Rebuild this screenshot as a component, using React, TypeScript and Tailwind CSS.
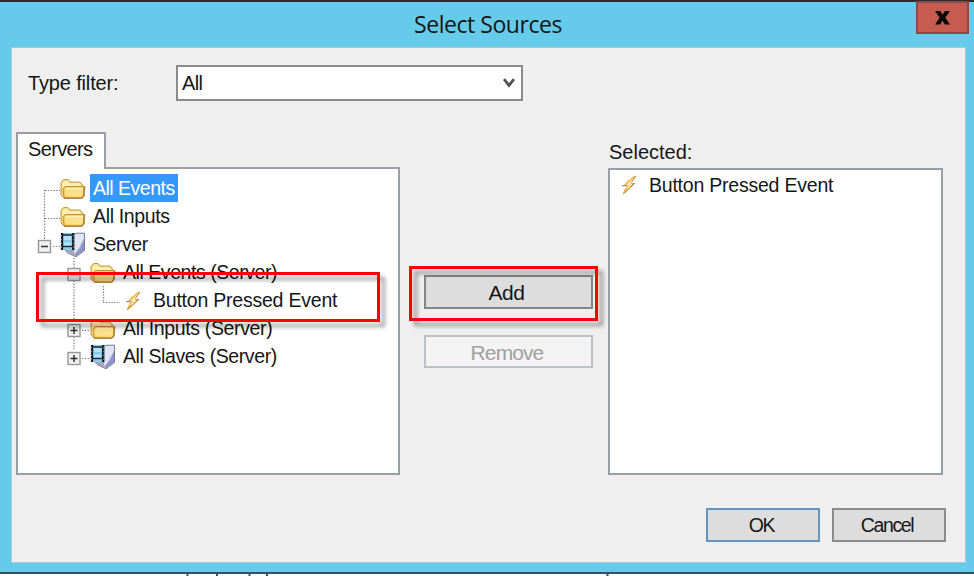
import React from "react";
import clsx from "clsx";

type IconName = "folder" | "server" | "bolt";

interface TreeItem {
  label: string;
  icon: IconName;
  level: number;
  spacing: string;
  selected?: boolean;
}

const treeItems: TreeItem[] = [
  { label: "All Events", icon: "folder", level: 0, spacing: "tracking-[-0.5px]", selected: true },
  { label: "All Inputs", icon: "folder", level: 0, spacing: "tracking-[-0.35px]" },
  { label: "Server", icon: "server", level: 0, spacing: "tracking-[-0.45px]" },
  { label: "All Events (Server)", icon: "folder", level: 1, spacing: "tracking-[-0.45px]" },
  { label: "Button Pressed Event", icon: "bolt", level: 2, spacing: "tracking-[-0.22px]" },
  { label: "All Inputs (Server)", icon: "folder", level: 1, spacing: "tracking-[-0.35px]" },
  { label: "All Slaves (Server)", icon: "server", level: 1, spacing: "tracking-[-0.4px]" },
];

const indents = ["pl-[42px]", "pl-[72px]", "pl-[102px]"];

const FolderIcon = () => (
  <svg width="26" height="22" viewBox="0 0 26 22">
    <path d="M1 17V4.5L3.5 1.5H8L10 4H20L22.5 7V17L4 20Z" fill="#f6d67d" stroke="#c39a45" />
    <path d="M2.3 10V5L4.2 2.8H7.5L9.5 5.2H19.5L21 7V9H5Z" fill="#fff0b0" />
    <path d="M4.2 20.2L3 11.5L5 8.5H25L24 17.5L21.8 20.2Z" fill="#f8cf60" stroke="#c2933a" />
    <path d="M5.3 18V11.2L6.4 9.8H23.5L22.3 17L20.8 18.8Z" fill="#fde08a" />
    <path d="M5.5 10.6H23" stroke="#fff3b8" strokeWidth="1.2" />
    <path d="M4.2 20.2H21.8L24 17.7V9" fill="none" stroke="#a67a38" strokeWidth="1.2" />
  </svg>
);

const ServerIcon = () => (
  <svg width="26" height="26" viewBox="0 0 26 26">
    <path d="M13 3L16 1.2H24.5V18.5L16 24.8L7 20.5L4.5 17.5H13Z" fill="#c3c5e2" stroke="#7b7d98" />
    <path d="M14.5 3L16.5 2H23.8V7L15 22L14.5 21Z" fill="#e4e5f4" />
    <path d="M24 7V18.3L16 24.2L14.5 22.5L20 16Z" fill="#8f92c2" />
    <path d="M5 18H14V23.3L8 20.3Z" fill="#a5a7b8" />
    <rect x="1" y="1" width="13.5" height="17" fill="#86c9ed" />
    <path d="M4 4H11V8H4ZM4 10.5H11V15.5H4Z" fill="#b5e2f8" />
    <path d="M2 1V18M13.2 1V18" stroke="#15171c" strokeWidth="2.2" />
    <path d="M1.3 3V18M13.9 3V18" stroke="#a9b4bc" strokeWidth="1" strokeDasharray="1.5 2.3" />
    <path d="M3 3H12M3 14.5H12" stroke="#202a38" strokeWidth="1.4" />
  </svg>
);

const BoltIcon = () => (
  <svg width="16" height="20" viewBox="0 0 16 20">
    <path d="M13.5 1.2L6 6L2.8 10.3H6.8L1.8 18.8L12 10.5L9.2 9.3L14.7 1.2Z" fill="#f8d379" />
    <path d="M10 8.7H13L2.2 18.8" fill="none" stroke="#bd8946" strokeWidth="1.3" />
    <path d="M14.2 1.2L8 6.5L4.2 10M6.8 11L3 17" fill="none" stroke="#f4b84a" strokeWidth="1.7" />
    <path d="M13.5 3L7.2 9.1H10.5L6 14" fill="none" stroke="#fff1bd" strokeWidth="1.2" />
    <path d="M1 10.7H6" stroke="#7f7780" strokeWidth="1" />
    <path d="M14.7 1L10.5 7.5" stroke="#a56a2d" strokeWidth="0.8" />
  </svg>
);

const ItemIcon = ({ name }: { name: IconName }) => {
  if (name === "folder") return <FolderIcon />;
  if (name === "server") return <ServerIcon />;
  return <BoltIcon />;
};

const Expander = ({ x, y, open }: { x: number; y: number; open?: boolean }) => (
  <g>
    <rect x={x - 6} y={y - 6} width="12" height="12" fill="#f0f0f0" stroke="#989898" strokeWidth="1.4" />
    <path d={`M${x - 3.5} ${y}H${x + 3.5}`} stroke="#333" strokeWidth="1.5" />
    {!open && <path d={`M${x} ${y - 3.5}V${y + 3.5}`} stroke="#333" strokeWidth="1.5" />}
  </g>
);

const TreeLines = () => (
  <svg className="absolute left-0 top-0" width="380" height="304" viewBox="18 169 380 304">
    <path
      d="M44.5 190V239M45 190.5H60M45 218.5H60M53 246.5H61M74 258V268M74 281V323M74 337V351M82 330.5H90M82 358.5H90M103.5 286V303M103 302.5H120"
      fill="none"
      stroke="#777"
      strokeWidth="1.2"
      strokeDasharray="1.3 1.5"
    />
    <Expander x={44.5} y={246.5} open />
    <Expander x={74} y={274.5} open />
    <Expander x={74} y={330.5} />
    <Expander x={74} y={358.5} />
  </svg>
);

const Tree = () => (
  <div className="relative h-[308px] w-[384px] border-2 border-[#9a9ea6] bg-white pt-[5px]">
    <TreeLines />
    {treeItems.map((item) => (
      <div key={item.label} className={clsx("relative flex h-7 items-center", indents[item.level])}>
        <div className="flex w-[26px] items-center justify-center pt-[2px]">
          <ItemIcon name={item.icon} />
        </div>
        <span
          className={clsx(
            "ml-1 h-7 whitespace-nowrap px-[3px] text-[19.5px] leading-[29px]",
            item.spacing,
            item.selected && "bg-[#3399ff] text-white"
          )}
        >
          {item.label}
        </span>
      </div>
    ))}
  </div>
);

// Red marker drawn over the part of the dialog that the user should look at
const Highlight = ({ className }: { className: string }) => (
  <div
    className={clsx(
      "pointer-events-none absolute border-[3px] border-[#fb0000] drop-shadow-[5px_5px_2px_rgba(0,0,0,0.4)]",
      className
    )}
  />
);

export default function App() {
  return (
    <div
      className="relative flex h-[576px] w-[974px] flex-col overflow-hidden bg-white text-[#161616]"
      style={{ fontFamily: '"Liberation Sans", Arial, sans-serif' }}
    >
      <div className="flex h-[574px] flex-col border-b-2 border-t-2 border-b-[#35515d] border-t-[#30282d] bg-[#66cbea]">
        {/* Title bar */}
        <div className="flex h-[45px] shrink-0 items-start pr-[5px]">
          <h1
            className="ml-[60px] flex-1 pt-[6px] text-center text-[23px] leading-8 tracking-[-0.45px]"
            style={{ fontFamily: '"Open Sans", "Noto Sans", sans-serif' }}
          >
            Select Sources
          </h1>
          <button className="-mt-px flex h-[33px] w-[53px] items-center justify-center border-2 border-[#874b48] bg-[#c75b50]">
            <svg width="15" height="14" viewBox="0 0 15 14">
              <path d="M0 0H5.2L7.5 3.5L10 0H15L10.3 6.7L15 13.5H9.8L7.5 9.8L5 13.5H0L4.7 6.7Z" fill="#090606" />
            </svg>
          </button>
        </div>

        {/* Dialog body */}
        <div className="ml-[11px] mr-2 h-[516px] border border-[#a9c9d5] bg-[#efefef] pl-1">
          <div className="flex items-center pt-[17px]">
            <label className="ml-3 w-[148px] text-[20px] leading-[34px] tracking-[-0.15px]">Type filter:</label>
            <div className="flex h-9 w-[347px] items-center justify-between border-2 border-[#8b8b8b] bg-white pl-1 pr-[6px]">
              <span className="text-[20px] tracking-[-0.6px]">All</span>
              <svg width="12" height="10" viewBox="0 0 12 10">
                <path d="M1 1.2L6 7.5L11 1.2" fill="none" stroke="#505050" strokeWidth="2.7" />
              </svg>
            </div>
          </div>

          <div className="mt-[31px] flex h-[343px]">
            <div>
              <div className="relative z-10 -mb-[2px] h-[37px] w-[90px] border-2 border-b-0 border-[#9a9ea6] bg-white pl-[10px] text-[20px] leading-[30px] tracking-[-0.65px]">
                Servers
              </div>
              <Tree />
            </div>

            <div className="ml-[24px] flex w-[169px] flex-col gap-[26px] pt-[143px]">
              <button className="h-[34px] border-2 border-[#858585] bg-[#dddddd] pr-1 text-[21px] leading-[32px] tracking-[-0.5px]">
                Add
              </button>
              <button className="h-[33px] border-2 border-[#bdc1c4] bg-[#f3f3f3] pr-[3px] text-[21px] leading-[31px] tracking-[-0.9px] text-[#a0a0a0]">
                Remove
              </button>
            </div>

            <div className="ml-[15px] w-[335px] pt-[5px]">
              <div className="h-[31px] pl-px text-[20px] leading-[30px]">Selected:</div>
              <div className="h-[307px] border-2 border-[#9a9ea6] bg-white">
                <div className="flex h-[30px] items-center pl-[11px] text-[19.5px] tracking-[-0.22px]">
                  <BoltIcon />
                  <span className="ml-[12px] leading-[29px]">Button Pressed Event</span>
                </div>
              </div>
            </div>
          </div>

          <div className="mr-[19px] mt-[33px] flex justify-end gap-3">
            <button className="h-[34px] w-[114px] border-2 border-[#5f97c0] bg-[#dddddd] pr-[3px] text-[19.5px] leading-[31px] tracking-[-1.4px]">
              OK
            </button>
            <button className="h-[34px] w-[114px] border-2 border-[#8b8b8b] bg-[#dddddd] pr-1 text-[19.5px] leading-[31px] tracking-[-1.4px]">
              Cancel
            </button>
          </div>
        </div>
      </div>

      {/* Top edge of the page behind the dialog */}
      <svg width="974" height="2" viewBox="0 0 974 2">
        <path d="M187.5 0V2M217 0V2M249.5 0V2M267 0V2M607.5 0V2" stroke="#4d4961" strokeWidth="2" />
      </svg>

      <Highlight className="left-[36px] top-[272px] h-[50px] w-[344px]" />
      <Highlight className="left-[409px] top-[266px] h-[55px] w-[189px]" />
    </div>
  );
}
